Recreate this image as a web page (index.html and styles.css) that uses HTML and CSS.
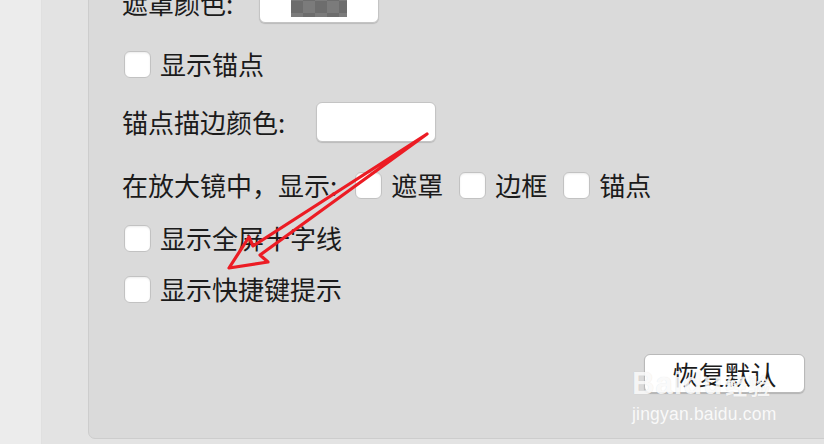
FILE: index.html
```html
<!DOCTYPE html>
<html lang="zh-CN">
<head>
  <meta charset="UTF-8" />
  <title>偏好设置</title>
  <link rel="stylesheet" href="styles.css">
</head>
<body>
  <div class="sidebar"></div>

  <div class="main">
    <div class="panel">
      <div class="row row-first">
        <span class="label">遮罩颜色:</span>
        <div class="color-box swatch-gap"><div class="checker"></div></div>
      </div>

      <label class="row row-anchor">
        <span class="check"></span>
        <span class="label">显示锚点</span>
      </label>

      <div class="row row-stroke">
        <span class="label">锚点描边颜色:</span>
        <div class="color-box stroke-gap"></div>
      </div>

      <div class="row row-magnifier">
        <span class="label">在放大镜中，显示:</span>
        <label class="inline-opt"><span class="check"></span><span class="label">遮罩</span></label>
        <label class="inline-opt"><span class="check"></span><span class="label">边框</span></label>
        <label class="inline-opt"><span class="check"></span><span class="label">锚点</span></label>
      </div>

      <label class="row row-cross">
        <span class="check"></span>
        <span class="label">显示全屏十字线</span>
      </label>

      <label class="row row-keys">
        <span class="check"></span>
        <span class="label">显示快捷键提示</span>
      </label>

      <div class="actions">
        <button class="btn">恢复默认</button>
      </div>
    </div>
  </div>

  <!-- hand drawn annotation -->
  <svg class="arrow" width="824" height="444" viewBox="0 0 824 444">
    <path d="M427 134 L253 246 L249 237 L229 268 L268 262 L260 255 L427 134 Z"
          fill="none" stroke="#ec1c24" stroke-width="3.2" stroke-linejoin="round" stroke-linecap="round"/>
  </svg>

  <div class="watermark">
    <div class="wm-logo">Baidu<span class="wm-cn">经验</span></div>
    <div class="wm-url">jingyan.baidu.com</div>
  </div>
</body>
</html>
```

FILE: styles.css
```css
* {
  box-sizing: border-box;
}
html, body {
  margin: 0;
  padding: 0;
  width: 824px;
  height: 444px;
  overflow: hidden;
}
body {
  display: flex;
  background: #e3e3e3;
  font-family: "Noto Sans CJK SC", "Noto Sans", sans-serif;
  color: #1b1b1b;
  position: relative;
}
.sidebar {
  flex: none;
  width: 42px;
  height: 100%;
  background: #ececec;
  border-right: 1px solid #e0e0e0;
}
.main {
  flex: 1;
  min-width: 0;
  padding-left: 46px;
}
.panel {
  width: 760px;
  height: 469px;
  margin-top: -30px;
  padding: 12px 0 0 33px;
  background: #dadada;
  border: 1px solid #cdcdcd;
  border-radius: 7px;
  display: flex;
  flex-direction: column;
}
.row {
  height: 40px;
  display: flex;
  align-items: center;
}
.row-anchor { margin-top: 21px; }
.row-stroke { margin-top: 18px; }
.row-magnifier { margin-top: 23px; }
.row-cross { margin-top: 13px; }
.row-keys { margin-top: 11px; }

.label {
  font-size: 26px;
  line-height: 40px;
  white-space: nowrap;
}
.check {
  width: 27px;
  height: 27px;
  margin-left: 2px;
  margin-right: 9px;
  background: #fff;
  border: 1px solid #c2c2c2;
  border-radius: 6px;
  box-shadow: inset 0 1px 2px rgba(0,0,0,0.08);
  flex: none;
}
.inline-opt {
  display: flex;
  align-items: center;
  margin-left: 16px;
}
.inline-opt .check {
  margin-left: 0;
}
.row-magnifier .inline-opt:first-of-type {
  margin-left: 18px;
}
.color-box {
  width: 120px;
  height: 40px;
  background: #fff;
  border: 1px solid #c4c4c4;
  border-radius: 6px;
  box-shadow: 0 1px 1px rgba(0,0,0,0.15);
  display: flex;
  align-items: center;
  justify-content: center;
}
.swatch-gap { margin-left: 26px; }
.stroke-gap { margin-left: 31px; }
.checker {
  width: 56px;
  height: 28px;
  background-color: #7b7b7b;
  background-image: conic-gradient(#6d6d6d 25%, #7b7b7b 0 50%, #6d6d6d 0 75%, #7b7b7b 0);
  background-size: 24px 24px;
}
.actions {
  display: flex;
  justify-content: flex-end;
  padding-right: 42px;
  margin-top: 45px;
}
.btn {
  width: 161px;
  height: 39px;
  background: #fff;
  border: 1px solid #b9b9b9;
  border-radius: 6px;
  box-shadow: 0 1px 1px rgba(0,0,0,0.18);
  font-family: "Noto Sans CJK SC", sans-serif;
  font-size: 26px;
  color: #1b1b1b;
  padding: 0;
  line-height: 37px;
}
.arrow {
  position: absolute;
  left: 0;
  top: 0;
  pointer-events: none;
}
.watermark {
  position: absolute;
  left: 632px;
  top: 366px;
  color: rgba(255,255,255,0.85);
  pointer-events: none;
}
.wm-logo {
  font-family: "Liberation Sans", sans-serif;
  font-size: 31px;
  font-weight: bold;
  line-height: 36px;
  letter-spacing: 1px;
  text-shadow: 0 0 1px rgba(0,0,0,0.12);
}
.wm-cn {
  font-family: "Noto Sans CJK SC", sans-serif;
  font-size: 22px;
  margin-left: 2px;
}
.wm-url {
  font-family: "Liberation Sans", sans-serif;
  font-size: 17.5px;
  line-height: 24px;
  letter-spacing: 0.2px;
}
```
